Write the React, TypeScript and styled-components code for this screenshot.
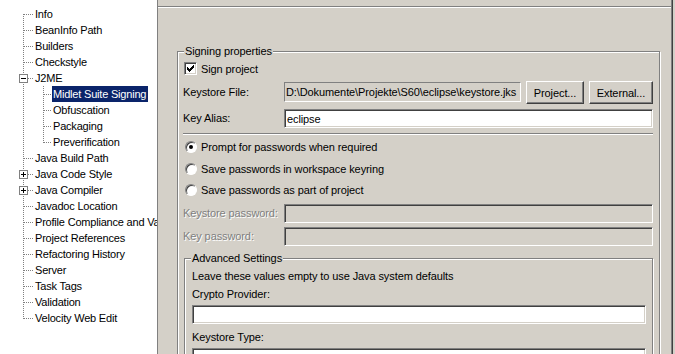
import React from 'react'
import styled, { createGlobalStyle, css } from 'styled-components'

const GlobalStyle = createGlobalStyle`
  * { box-sizing: border-box; }
  html, body { margin: 0; padding: 0; }
  body {
    width: 675px;
    height: 354px;
    overflow: hidden;
    background: #d4d0c8;
    font-family: 'Liberation Sans', Arial, sans-serif;
    font-size: 11px;
    letter-spacing: -0.1px;
    color: #000;
  }
`

interface Node {
  label: string
  child?: boolean
  lastChild?: boolean
  expander?: 'plus' | 'minus'
  selected?: boolean
}

const nodes: Node[] = [
  { label: 'Info' },
  { label: 'BeanInfo Path' },
  { label: 'Builders' },
  { label: 'Checkstyle' },
  { label: 'J2ME', expander: 'minus' },
  { label: 'Midlet Suite Signing', child: true, selected: true },
  { label: 'Obfuscation', child: true },
  { label: 'Packaging', child: true },
  { label: 'Preverification', child: true, lastChild: true },
  { label: 'Java Build Path' },
  { label: 'Java Code Style', expander: 'plus' },
  { label: 'Java Compiler', expander: 'plus' },
  { label: 'Javadoc Location' },
  { label: 'Profile Compliance and Validation' },
  { label: 'Project References' },
  { label: 'Refactoring History' },
  { label: 'Server' },
  { label: 'Task Tags' },
  { label: 'Validation' },
  { label: 'Velocity Web Edit' },
]

const CheckMark = () => (
  <svg width="7" height="7" viewBox="0 0 7 7" shapeRendering="crispEdges">
    <polygon points="0,2 2,4 6,0 7,0 7,3 2,7 0,5" fill="#000" />
  </svg>
)

export default function App() {
  return (
    <>
      <GlobalStyle />
      <Window>
        <TreePane>
          {nodes.map((n, i) => {
            const first = i === 0
            const last = i === nodes.length - 1
            return (
              <TreeRow key={n.label} $indent={n.child ? 52 : 34}>
                <VGuide $x={23} $top={first ? 8 : 0} $height={first ? 8 : last ? 9 : 16} />
                {n.child ? (
                  <>
                    <VGuide $x={43} $top={0} $height={n.lastChild ? 9 : 16} />
                    <HGuide $x={44} $w={8} />
                  </>
                ) : (
                  <HGuide $x={24} $w={10} />
                )}
                {n.expander && <Expander $plus={n.expander === 'plus'} />}
                <TreeLabel $selected={n.selected}>{n.label}</TreeLabel>
              </TreeRow>
            )
          })}
        </TreePane>

        <Main>
          <TitleRule />
          <SigningGroup>
            <GroupTitle>Signing properties</GroupTitle>
            <CheckRow>
              <CheckBox>
                <CheckMark />
              </CheckBox>
              Sign project
            </CheckRow>

            <FormRow $mt={4} $h={23}>
              <FieldLabel $h={23}>Keystore File:</FieldLabel>
              <PathField readOnly value={'D:\\Dokumente\\Projekte\\S60\\eclipse\\keystore.jks'} />
              <Button $w={58}>Project...</Button>
              <Button $w={64} $last>
                External...
              </Button>
            </FormRow>

            <FormRow $mt={5} $h={19}>
              <FieldLabel $h={19}>Key Alias:</FieldLabel>
              <Field defaultValue="eclipse" />
            </FormRow>

            <Rule />

            <RadioRow $mt={4}>
              <Radio $checked />
              Prompt for passwords when required
            </RadioRow>
            <RadioRow $mt={6}>
              <Radio />
              Save passwords in workspace keyring
            </RadioRow>
            <RadioRow $mt={5}>
              <Radio />
              Save passwords as part of project
            </RadioRow>

            <FormRow $mt={6} $h={19}>
              <FieldLabel $h={19} $disabled>
                Keystore password:
              </FieldLabel>
              <Field disabled $disabled />
            </FormRow>
            <FormRow $mt={4} $h={19}>
              <FieldLabel $h={19} $disabled>
                Key password:
              </FieldLabel>
              <Field disabled $disabled />
            </FormRow>

            <AdvancedGroup>
              <GroupTitle>Advanced Settings</GroupTitle>
              <TextLine>Leave these values empty to use Java system defaults</TextLine>
              <TextLine $mt={4}>Crypto Provider:</TextLine>
              <StackField />
              <TextLine $mt={6}>Keystore Type:</TextLine>
              <StackField />
            </AdvancedGroup>
          </SigningGroup>
        </Main>
        <Edge />
      </Window>
    </>
  )
}

const Window = styled.div`
  display: flex;
  width: 675px;
  height: 354px;
  overflow: hidden;
`

const TreePane = styled.div`
  flex: none;
  width: 158px;
  padding-top: 6px;
  background: #fff;
  border-right: 1px solid #808080;
  overflow: hidden;
  white-space: nowrap;
`

const TreeRow = styled.div<{ $indent: number }>`
  position: relative;
  display: flex;
  height: 16px;
  padding-left: ${p => p.$indent}px;
`

const TreeLabel = styled.span<{ $selected?: boolean }>`
  height: 16px;
  padding: 0 2px 0 1px;
  line-height: 16px;
  letter-spacing: -0.2px;

  ${p =>
    p.$selected &&
    css`
      background: #0a246a;
      color: #fff;
    `};
`

const VGuide = styled.span<{ $x: number; $top: number; $height: number }>`
  position: absolute;
  left: ${p => p.$x}px;
  top: ${p => p.$top}px;
  width: 1px;
  height: ${p => p.$height}px;
  background: linear-gradient(#808080 50%, transparent 50%) 0 0 / 1px 2px repeat-y;
`

const HGuide = styled.span<{ $x: number; $w: number }>`
  position: absolute;
  left: ${p => p.$x}px;
  top: 8px;
  width: ${p => p.$w}px;
  height: 1px;
  background: linear-gradient(to right, #808080 50%, transparent 50%) 0 0 / 2px 1px repeat-x;
`

const Expander = styled.span<{ $plus?: boolean }>`
  position: absolute;
  left: 19px;
  top: 4px;
  width: 9px;
  height: 9px;
  background: #fff;
  border: 1px solid #808080;

  &::before {
    content: '';
    position: absolute;
    left: 1px;
    top: 3px;
    width: 5px;
    height: 1px;
    background: #000;
  }

  ${p =>
    p.$plus &&
    css`
      &::after {
        content: '';
        position: absolute;
        left: 3px;
        top: 1px;
        width: 1px;
        height: 5px;
        background: #000;
      }
    `};
`

const Main = styled.div`
  flex: 1;
  min-width: 0;
  display: flex;
  flex-direction: column;
  padding-top: 6px;
`

const Edge = styled.div`
  flex: none;
  width: 2px;
  margin-right: 2px;
  border-left: 1px solid #808080;
  border-right: 1px solid #404040;
`

const TitleRule = styled.div`
  height: 2px;
  border-top: 1px solid #808080;
  border-bottom: 1px solid #fff;
`

const etched = css`
  position: relative;
  border: 1px solid #808080;
  box-shadow: inset 1px 1px 0 #fff, 1px 1px 0 #fff;
`

const SigningGroup = styled.div`
  ${etched};
  display: flex;
  flex-direction: column;
  flex: none;
  width: 483px;
  height: 420px;
  margin: 43px 0 0 19px;
  padding: 8px 6px 0 5px;
`

const AdvancedGroup = styled.div`
  ${etched};
  display: flex;
  flex-direction: column;
  flex: none;
  height: 140px;
  margin: 12px 0 0 1px;
  padding: 10px 6px 0 7px;
`

const GroupTitle = styled.span`
  position: absolute;
  left: 6px;
  top: -8px;
  padding: 0 1px;
  line-height: 14px;
  background: #d4d0c8;
`

const CheckRow = styled.label`
  display: flex;
  align-items: center;
  height: 17px;
`

const CheckBox = styled.span`
  display: flex;
  align-items: center;
  justify-content: center;
  flex: none;
  width: 13px;
  height: 13px;
  margin: 0 4px 0 1px;
  background: #fff;
  border: 1px solid;
  border-color: #808080 #fff #fff #808080;
  box-shadow: inset 1px 1px 0 #404040, inset -1px -1px 0 #d4d0c8;
`

const FormRow = styled.div<{ $mt: number; $h: number }>`
  display: flex;
  align-items: flex-start;
  height: ${p => p.$h}px;
  margin-top: ${p => p.$mt}px;
`

const FieldLabel = styled.span<{ $h: number; $disabled?: boolean }>`
  flex: none;
  width: 101px;
  line-height: ${p => p.$h}px;
  white-space: nowrap;

  ${p =>
    p.$disabled &&
    css`
      color: #808080;
      text-shadow: 1px 1px 0 #fff;
    `};
`

const sunken = css`
  display: block;
  margin: 0;
  font: inherit;
  letter-spacing: inherit;
  color: #000;
  outline: none;
  border: 1px solid;
  border-color: #808080 #fff #fff #808080;
`

const Field = styled.input<{ $disabled?: boolean }>`
  ${sunken};
  flex: 1;
  min-width: 0;
  height: 19px;
  padding: 0 2px;
  background: ${p => (p.$disabled ? '#d4d0c8' : '#fff')};
  box-shadow: inset 1px 1px 0 #404040, inset -1px -1px 0 #d4d0c8;
`

const PathField = styled.input`
  ${sunken};
  flex: 1;
  min-width: 0;
  height: 20px;
  margin: 1px 5px 0 0;
  padding: 0 1px;
  background: #d4d0c8;
`

const StackField = styled.input`
  ${sunken};
  flex: none;
  height: 19px;
  margin-top: 4px;
  padding: 0 2px;
  background: #fff;
  box-shadow: inset 1px 1px 0 #404040, inset -1px -1px 0 #d4d0c8;
`

const Button = styled.button<{ $w: number; $last?: boolean }>`
  flex: none;
  width: ${p => p.$w}px;
  height: 23px;
  margin: 0 ${p => (p.$last ? 0 : 5)}px 0 0;
  padding: 0;
  font: inherit;
  letter-spacing: inherit;
  color: #000;
  background: #d4d0c8;
  border: 1px solid;
  border-color: #fff #404040 #404040 #fff;
  box-shadow: inset -1px -1px 0 #808080;
`

const Rule = styled.div`
  height: 2px;
  margin-top: 5px;
  border-top: 1px solid #808080;
  border-bottom: 1px solid #fff;
`

const RadioRow = styled.label<{ $mt: number }>`
  display: flex;
  align-items: center;
  height: 16px;
  margin-top: ${p => p.$mt}px;
`

const Radio = styled.span<{ $checked?: boolean }>`
  position: relative;
  flex: none;
  width: 12px;
  height: 12px;
  margin: 0 4px 0 2px;
  border-radius: 50%;
  background: #fff;
  border: 1px solid;
  border-color: #808080 #fff #fff #808080;
  box-shadow: inset 1px 1px 0 #404040;

  ${p =>
    p.$checked &&
    css`
      &::after {
        content: '';
        position: absolute;
        left: 3px;
        top: 3px;
        width: 4px;
        height: 4px;
        border-radius: 50%;
        background: #000;
      }
    `};
`

const TextLine = styled.div<{ $mt?: number }>`
  line-height: 14px;
  margin-top: ${p => p.$mt || 0}px;
  white-space: nowrap;
`
